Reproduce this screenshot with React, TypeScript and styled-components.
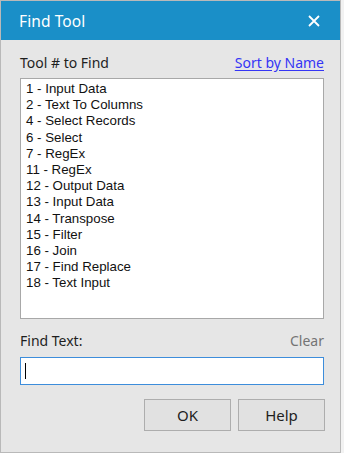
import React from "react";
import styled, { createGlobalStyle } from "styled-components";

const GlobalStyle = createGlobalStyle`
  html, body {
    margin: 0;
    padding: 0;
    background: #f2f2f2;
  }
`;

const tools = [
  "1 - Input Data",
  "2 - Text To Columns",
  "4 - Select Records",
  "6 - Select",
  "7 - RegEx",
  "11 - RegEx",
  "12 - Output Data",
  "13 - Input Data",
  "14 - Transpose",
  "15 - Filter",
  "16 - Join",
  "17 - Find Replace",
  "18 - Text Input",
];

const uiFont = `"Noto Sans", "Open Sans", sans-serif`;

const Window = styled.div`
  box-sizing: border-box;
  width: 341px;
  height: 453px;
  display: flex;
  flex-direction: column;
  background: #e6e6e6;
  border: 1px solid #b9b9b9;
  font-family: ${uiFont};
  color: #1e1e1e;
`;

const TitleBar = styled.div`
  height: 39px;
  flex: 0 0 auto;
  display: flex;
  align-items: center;
  justify-content: space-between;
  padding: 0 20px 0 18px;
  background: #1a8fc8;
  color: #ffffff;
`;

const Title = styled.div`
  font-size: 15.5px;
  letter-spacing: 0.1px;
`;

const CloseButton = styled.div`
  width: 12px;
  height: 12px;
  display: flex;
`;

const Body = styled.div`
  display: flex;
  flex-direction: column;
  padding: 13px 16px 0 19px;
`;

const LabelRow = styled.div<{ $gap: number }>`
  height: 18px;
  display: flex;
  align-items: center;
  justify-content: space-between;
  margin-bottom: ${(p) => p.$gap}px;
  font-size: 14px;
`;

const Label = styled.span`
  color: #1e1e1e;
`;

const LinkText = styled.span`
  color: #3535f5;
  text-decoration: underline;
  text-underline-offset: 2px;
  cursor: pointer;
`;

const MutedAction = styled.span`
  color: #747474;
`;

const ListBox = styled.div`
  box-sizing: border-box;
  height: 241px;
  padding: 2px 5px;
  background: #ffffff;
  border: 1px solid #a8a8a8;
  margin-bottom: 12px;
`;

const ListItem = styled.div`
  font-family: "Liberation Sans", Arial, sans-serif;
  font-size: 13.3px;
  line-height: 16.2px;
  color: #111111;
  white-space: nowrap;
`;

const TextBox = styled.div`
  box-sizing: border-box;
  height: 28px;
  display: flex;
  align-items: center;
  padding-left: 4px;
  background: #ffffff;
  border: 1px solid #3d8ddb;
`;

const Caret = styled.span`
  width: 1px;
  height: 16px;
  background: #000000;
`;

const ButtonRow = styled.div`
  display: flex;
  justify-content: flex-end;
  gap: 7px;
  margin-top: 14px;
  margin-right: -1px;
`;

const Button = styled.button`
  box-sizing: border-box;
  width: 87px;
  height: 32px;
  background: #e1e1e1;
  border: 1px solid #adadad;
  font-family: ${uiFont};
  font-size: 15px;
  color: #1e1e1e;
  padding: 0;
`;

const App: React.FC = () => (
  <>
    <GlobalStyle />
    <Window>
      <TitleBar>
        <Title>Find Tool</Title>
        <CloseButton>
          <svg width="12" height="12" viewBox="0 0 12 12">
            <path d="M1 1 L11 11 M11 1 L1 11" stroke="#ffffff" strokeWidth="1.8" />
          </svg>
        </CloseButton>
      </TitleBar>
      <Body>
        <LabelRow $gap={7}>
          <Label>Tool # to Find</Label>
          <LinkText>Sort by Name</LinkText>
        </LabelRow>
        <ListBox>
          {tools.map((t) => (
            <ListItem key={t}>{t}</ListItem>
          ))}
        </ListBox>
        <LabelRow $gap={8}>
          <Label>Find Text:</Label>
          <MutedAction>Clear</MutedAction>
        </LabelRow>
        <TextBox>
          <Caret />
        </TextBox>
        <ButtonRow>
          <Button>OK</Button>
          <Button>Help</Button>
        </ButtonRow>
      </Body>
    </Window>
  </>
);

export default App;
